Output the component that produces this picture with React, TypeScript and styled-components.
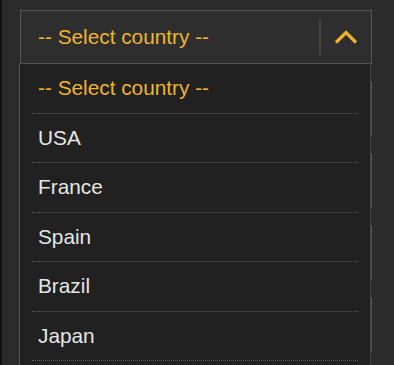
import styled, { createGlobalStyle } from "styled-components";

const GlobalStyle = createGlobalStyle`
  html, body {
    margin: 0;
    padding: 0;
    background: #2b2b2b;
    font-family: "Liberation Sans", Arial, sans-serif;
  }
`;

const Page = styled.div`
  height: 365px;
  border-left: 2px solid #111;
  padding: 10px 0 0 18px;
  box-sizing: border-box;
  overflow: hidden;
`;

const Form = styled.div`
  width: 352px;
  display: flex;
  flex-direction: column;
  gap: 18px;
`;

const SelectWrap = styled.div`
  position: relative;
`;

const SelectBox = styled.div`
  height: 54px;
  box-sizing: border-box;
  border: 1px solid #555;
  background: #2e2e2e;
  display: flex;
  align-items: center;
`;

const SelectLabel = styled.span`
  flex: 1;
  padding-left: 17px;
  font-size: 20.8px;
  color: #f0b42c;
`;

const Divider = styled.span`
  width: 2px;
  height: 35px;
  background: #444;
  margin-top: 1px;
`;

const ChevronBox = styled.span`
  width: 50px;
  display: flex;
  justify-content: center;
  align-items: center;
`;

const Dropdown = styled.ul`
  position: absolute;
  top: 54px;
  left: -1px;
  width: 352px;
  box-sizing: border-box;
  margin: 0;
  padding: 0;
  list-style: none;
  background: #212121;
  border-left: 1px solid #555;
  border-right: 1px solid #444;
  z-index: 2;
`;

const Option = styled.li<{ $placeholder?: boolean }>`
  height: 49.5px;
  box-sizing: border-box;
  margin: 0 12px;
  padding: 0 6px;
  display: flex;
  align-items: center;
  border-bottom: 1px dotted #5a5a5a;
  font-size: 20.8px;
  color: ${(p) => (p.$placeholder ? "#f0b42c" : "#e6e6e6")};
`;

const Field = styled.div`
  height: 54px;
  box-sizing: border-box;
  border: 1px solid #555;
  background: #2e2e2e;
`;

const countries = ["USA", "France", "Spain", "Brazil", "Japan"];

export default function App() {
  return (
    <>
      <GlobalStyle />
      <Page>
        <Form>
          <SelectWrap>
            <SelectBox>
              <SelectLabel>-- Select country --</SelectLabel>
              <Divider />
              <ChevronBox>
                <svg width="24" height="16" viewBox="0 0 24 16">
                  <polyline
                    points="2,13.5 12,3.5 22,13.5"
                    fill="none"
                    stroke="#f0b42c"
                    strokeWidth="3.2"
                  />
                </svg>
              </ChevronBox>
            </SelectBox>
            <Dropdown>
              <Option $placeholder>-- Select country --</Option>
              {countries.map((c) => (
                <Option key={c}>{c}</Option>
              ))}
              <Option aria-hidden="true" />
            </Dropdown>
          </SelectWrap>
          <Field />
          <Field />
          <Field />
          <Field />
        </Form>
      </Page>
    </>
  );
}
